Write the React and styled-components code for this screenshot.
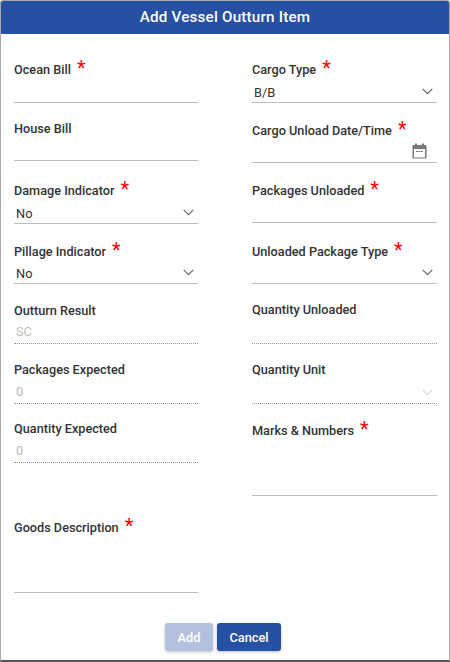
import React from 'react';
import styled, { createGlobalStyle } from 'styled-components';

const GlobalStyle = createGlobalStyle`
  html, body {
    margin: 0;
    padding: 0;
    background: #fff;
    font-family: Roboto, "Liberation Sans", sans-serif;
  }
`;

const Dialog = styled.div`
  width: 450px;
  height: 662px;
  box-sizing: border-box;
  border-top: 1px solid #a9a9a9;
  border-left: 1px solid #a9a9a9;
  border-right: 1px solid #a9a9a9;
  border-bottom: 2px solid #555;
  border-radius: 3px 3px 0 0;
  display: flex;
  flex-direction: column;
  background: #fff;
  overflow: hidden;
`;

const Header = styled.h1`
  margin: 0;
  height: 33px;
  flex: none;
  background: #2650a3;
  color: #fff;
  font-size: 15.2px;
  font-weight: 500;
  line-height: 33px;
  text-align: center;
  letter-spacing: 0.2px;
`;

const Body = styled.div`
  flex: 1;
  display: grid;
  grid-template-columns: 184px 185px;
  column-gap: 54px;
  align-items: start;
  padding: 28px 0 0 13px;
`;

const Column = styled.div`
  display: flex;
  flex-direction: column;
`;

const Field = styled.div`
  height: ${(p) => p.$pitch}px;
  flex: none;
`;

const Label = styled.div`
  height: 16px;
  display: flex;
  align-items: center;
  font-size: 12.7px;
  font-weight: 500;
  line-height: 16px;
  color: #333;
  white-space: nowrap;
`;

const Star = styled.span`
  color: #f00;
  font-size: 20px;
  line-height: 16px;
  font-weight: 400;
  margin-left: 6px;
  position: relative;
  top: -2px;
`;

const Control = styled.div`
  height: ${(p) => p.$tall}px;
  box-sizing: border-box;
  border-bottom: 1px ${(p) => (p.$disabled ? 'dotted #999' : 'solid #bdbdbd')};
  display: flex;
  align-items: flex-end;
  justify-content: space-between;
  padding: 0 4px ${(p) => (p.$disabled ? 3 : 1)}px 2px;
  font-size: 12.8px;
  line-height: 16px;
  color: ${(p) => (p.$disabled ? '#bdbdbd' : '#333')};
`;

const Footer = styled.div`
  flex: none;
  height: 37px;
  display: flex;
  justify-content: center;
  gap: 4px;
  padding-right: 4px;
`;

const Button = styled.button`
  height: 28px;
  width: ${(p) => p.$width}px;
  border: none;
  border-radius: 3px;
  padding: 0;
  background: ${(p) => (p.$muted ? '#b3c1de' : '#2650a3')};
  color: #fff;
  font-family: inherit;
  font-size: 12.8px;
  font-weight: 500;
  box-shadow: 0 1px 3px rgba(0, 0, 0, 0.25);
`;

const ChevronIcon = styled.svg`
  margin-bottom: ${(p) => (p.$faded ? 4 : 6)}px;
`;

const CalendarIcon = styled.svg`
  margin: 0 6px 2px 0;
`;

const Chevron = ({ faded }) => (
  <ChevronIcon $faded={faded} width="11" height="7" viewBox="0 0 11 7" fill="none">
    <path d="M0.7 0.8 L5.5 5.6 L10.3 0.8" stroke={faded ? '#d4d4d4' : '#666'} strokeWidth="1.2" />
  </ChevronIcon>
);

const Calendar = () => (
  <CalendarIcon width="15" height="16" viewBox="0 0 15 16" fill="none">
    <path d="M3 0.5 h2 v1.5 h5 v-1.5 h2 v1.5 h1.5 a1 1 0 0 1 1 1 v11.5 a1 1 0 0 1 -1 1 h-12 a1 1 0 0 1 -1 -1 v-11.5 a1 1 0 0 1 1 -1 h1.500 z" fill="#777" />
    <rect x="2" y="6" width="11" height="8.500" fill="#fff" />
    <path d="M4 8.500 h2 M6.500 8.500 h2 M9 8.500 h2" stroke="#777" />
  </CalendarIcon>
);

const leftFields = [
  { label: 'Ocean Bill', star: true, pitch: 59, tall: 25 },
  { label: 'House Bill', pitch: 62, tall: 24 },
  { label: 'Damage Indicator', star: true, pitch: 61, tall: 25, value: 'No', select: true },
  { label: 'Pillage Indicator', star: true, pitch: 59, tall: 24, value: 'No', select: true },
  { label: 'Outturn Result', pitch: 59, tall: 25, value: 'SC', disabled: true },
  { label: 'Packages Expected', pitch: 59, tall: 26, value: '0', disabled: true },
  { label: 'Quantity Expected', pitch: 99, tall: 26, value: '0', disabled: true },
  { label: 'Goods Description', star: true, pitch: 74, tall: 57 },
];

const rightFields = [
  { label: 'Cargo Type', star: true, pitch: 61, tall: 25, value: 'B/B', select: true },
  { label: 'Cargo Unload Date/Time', star: true, pitch: 60, tall: 24, calendar: true },
  { label: 'Packages Unloaded', star: true, pitch: 61, tall: 24 },
  { label: 'Unloaded Package Type', star: true, pitch: 58, tall: 24, select: true },
  { label: 'Quantity Unloaded', pitch: 60, tall: 26, disabled: true },
  { label: 'Quantity Unit', pitch: 61, tall: 26, disabled: true, select: true },
  { label: 'Marks & Numbers', star: true, pitch: 74, tall: 57 },
];

const FormField = ({ label, star, pitch, tall, value, select, calendar, disabled }) => (
  <Field $pitch={pitch}>
    <Label>
      {label}
      {star && <Star>*</Star>}
    </Label>
    <Control $tall={tall} $disabled={disabled}>
      <span>{value}</span>
      {select && <Chevron faded={disabled} />}
      {calendar && <Calendar />}
    </Control>
  </Field>
);

export default function App() {
  return (
    <>
      <GlobalStyle />
      <Dialog>
        <Header>Add Vessel Outturn Item</Header>
        <Body>
          <Column>
            {leftFields.map((f) => (
              <FormField key={f.label} {...f} />
            ))}
          </Column>
          <Column>
            {rightFields.map((f) => (
              <FormField key={f.label} {...f} />
            ))}
          </Column>
        </Body>
        <Footer>
          <Button $muted $width={48}>Add</Button>
          <Button $width={64}>Cancel</Button>
        </Footer>
      </Dialog>
    </>
  );
}
